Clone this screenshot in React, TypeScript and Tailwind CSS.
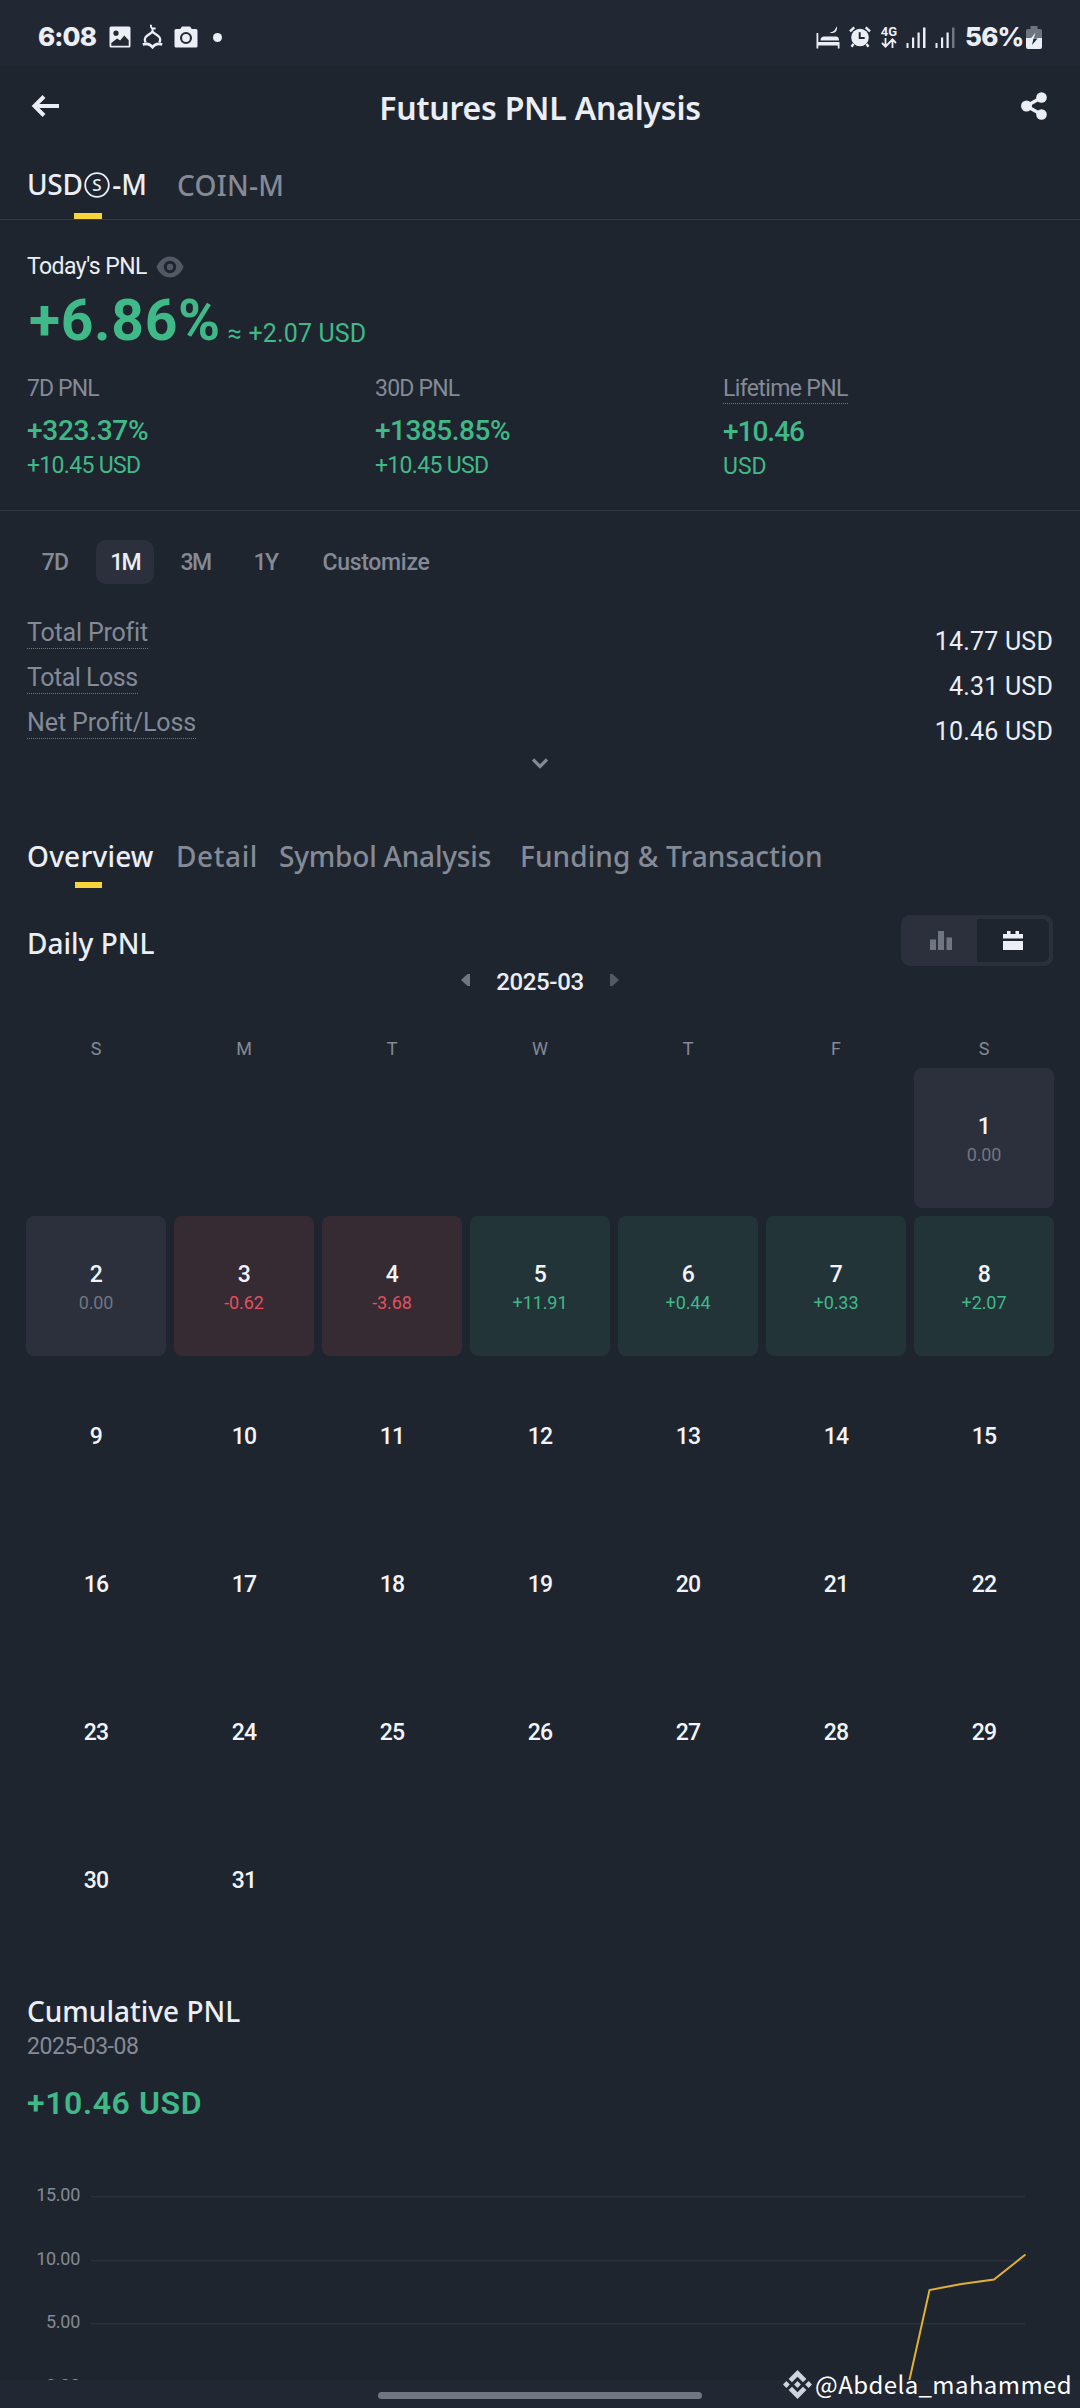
import React from 'react';

const WHITE = '#eceef5';

function StatusBar() {
  return (
    <header className="flex h-[66px] items-center justify-between bg-[#212733] pt-[8px] pr-[38px] pl-[38px] text-[#eceef5]">
      <div className="flex items-center">
        <span className="w-[59px] font-[Inter,sans-serif] text-[26px] leading-[26px] font-extrabold tracking-[-0.9px]">6:08</span>
        <svg className="ml-[12px] h-[22px] w-[22px]" viewBox="0 0 22 22">
          <path fillRule="evenodd" fill={WHITE} d="M2 0.5h18a1.5 1.5 0 0 1 1.5 1.5v18a1.5 1.5 0 0 1-1.5 1.5H2A1.5 1.5 0 0 1 .5 20V2A1.5 1.5 0 0 1 2 .5zM2.3 19.7h17.4v-5.4l-4.4-4.9-4.2 5.2-3-2.2-5.8 4.6zM7 4.6a2.6 2.6 0 1 0 0 5.2 2.6 2.6 0 0 0 0-5.2z" />
        </svg>
        <svg className="-mt-[2px] ml-[11px] h-[25px] w-[21px]" viewBox="0 0 21 25" fill="none" stroke={WHITE} strokeWidth="2">
          <path d="M9 .8c-.6 3 1 4.600 4.600 3.400" />
          <path d="M10.500 4v3.500" />
          <path d="M3.600 18.500c-2.500-5 1.500-7 4-8.500 1.600-1 2.900-2 2.900-3 0 1 1.300 2 2.900 3 2.500 1.500 6.500 3.500 4 8.500" strokeWidth="2.400" />
          <path d="M.8 20.600c4-1.400 7.300-.6 9.700 2.600 2.400-3.200 5.700-4 9.700-2.600" strokeWidth="2.600" />
        </svg>
        <svg className="ml-[11px] h-[22px] w-[24px]" viewBox="0 0 24 22">
          <path fillRule="evenodd" fill={WHITE} d="M8 .5h8l1.800 2.500H22a1.500 1.500 0 0 1 1.500 1.500V20a1.500 1.500 0 0 1-1.500 1.500H2A1.500 1.500 0 0 1 .5 20V4.500A1.500 1.500 0 0 1 2 3h4.200zM12 6a6 6 0 1 0 0 12 6 6 0 0 0 0-12z" />
          <circle cx="12" cy="12" r="3.900" fill={WHITE} />
        </svg>
        <span className="ml-[15px] h-[9px] w-[9px] rounded-full bg-[#eceef5]" />
      </div>
      <div className="flex items-center">
        <svg className="h-[23px] w-[24px]" viewBox="0 0 24 23" fill={WHITE}>
          <path d="M.5 7h1.800v9h21.200v6.500h-1.700v-3H2.300v3H.5z" />
          <path d="M4.500 14.500c0-3 1.500-4 3.500-4h12c2 0 3 1.500 3 4z" />
          <path d="M20.300.3c2.300 4-1.800 8.500-6.600 6.100 3 0 5.900-1.700 6.600-6.100z" />
        </svg>
        <svg className="ml-[9px] h-[22px] w-[22px]" viewBox="0 0 22 22">
          <circle cx="11" cy="11.500" r="8.800" fill={WHITE} />
          <path d="M4.500 18l-2 2.800M17.500 18l2 2.800M1 5.300l4.300-3.900M21 5.300l-4.300-3.900" stroke={WHITE} strokeWidth="2.400" />
          <path d="M10.700 6.300v5.700h5" fill="none" stroke="#212733" strokeWidth="2" />
        </svg>
        <span className="ml-[9px] flex h-[22px] w-[18px] flex-col items-center">
          <span className="text-[13px] leading-[11px] font-bold">4G</span>
          <svg className="mt-[1px] h-[10px] w-[16px]" viewBox="0 0 16 10" fill="none" stroke={WHITE} strokeWidth="1.800">
            <path d="M4.500 0v8.500M1 5l3.500 3.600L8 5M11.500 10V1.500M8 5l3.500-3.600L15 5" />
          </svg>
        </span>
        <svg className="ml-[8px] h-[21px] w-[20px]" viewBox="0 0 20 21" fill={WHITE}>
          <path d="M.5 16H2.500v5H.5zM6 10.500H8.200V21H6zM11.500 5.500h2.200V21h-2.200zM17 .5h2.500V21H17z" />
        </svg>
        <svg className="ml-[9px] h-[21px] w-[20px]" viewBox="0 0 20 21" fill={WHITE}>
          <path d="M.5 16H2.500v5H.5zM6 10.500H8.200V21H6zM11.500 5.500h2.200V21h-2.200z" />
          <path d="M17 .5h2.500V21H17z" opacity=".4" />
        </svg>
        <span className="ml-[10px] w-[61px] font-[Inter,sans-serif] text-[26px] leading-[26px] font-extrabold tracking-[-0.8px]">56%</span>
        <svg className="h-[23px] w-[16px]" viewBox="0 0 16 23">
          <path d="M4.500 0h7v3H14a2 2 0 0 1 2 2v7H0V5a2 2 0 0 1 2-2h2.500z" fill="#6f7580" />
          <path d="M0 12h16v9a2 2 0 0 1-2 2H2a2 2 0 0 1-2-2z" fill={WHITE} />
          <path d="M9.500 6.500L4.500 13h3z" fill={WHITE} />
          <path d="M6 19l1.500-6.500h4z" fill="#212733" />
        </svg>
      </div>
    </header>
  );
}

function TitleBar() {
  return (
    <div className="flex h-[85px] items-center justify-between pr-[33px] pl-[31px]">
      <svg className="-mt-[5px] h-[22px] w-[28px]" viewBox="0 0 28 22" fill="none" stroke={WHITE} strokeWidth="4">
        <path d="M3.500 11H28" />
        <path d="M13 1.500L3.500 11l9.500 9.500" />
      </svg>
      <h1 className="-mt-[1px] font-['Noto_Sans',sans-serif] text-[32px] font-semibold tracking-[-0.21px] text-[#eceef5]">Futures PNL Analysis</h1>
      <svg className="-mt-[5px] h-[28px] w-[26px]" viewBox="0 0 26 28" fill={WHITE}>
        <circle cx="5.500" cy="14" r="5.500" />
        <circle cx="20.500" cy="5.500" r="5.300" />
        <circle cx="20.500" cy="22.500" r="5.300" />
        <path d="M5.500 14l15-8.500M5.500 14l15 8.500" stroke={WHITE} strokeWidth="3.400" />
      </svg>
    </div>
  );
}

function MarginTabs() {
  return (
    <nav className="flex h-[69px] border-b border-[#333b47] pl-[27px] font-['Noto_Sans',sans-serif] text-[28px] font-medium">
      <div className="relative flex w-[120px] items-center justify-between text-[#eceef5]">
        <span className="-mt-[2px] tracking-[-0.3px]">USD</span>
        <svg className="h-[26px] w-[26px]" viewBox="0 0 26 26">
          <circle cx="13" cy="13" r="11.800" fill="none" stroke={WHITE} strokeWidth="1.800" />
          <text x="13" y="19.300" textAnchor="middle" fontSize="17" fontWeight="500" fill={WHITE}>S</text>
        </svg>
        <span className="-mt-[2px]">-M</span>
        <span className="absolute bottom-0 left-[47px] h-[6px] w-[28px] bg-[#f8d33a]" />
      </div>
      <div className="ml-[30px] flex items-center tracking-[0.3px] text-[#848a96]">COIN-M</div>
    </nav>
  );
}

function PnlSummary() {
  return (
    <section className="h-[291px] border-b border-[#2e3540] pt-[32px] pl-[27px] text-[#3fb987]">
      <div className="flex h-[30px] items-center">
        <span className="text-[23px] tracking-[-0.57px] text-[#eceef5]">Today's PNL</span>
        <svg className="-mt-[1px] ml-[9px] h-[22px] w-[28px]" viewBox="0 0 28 22">
          <path fillRule="evenodd" fill="#525964" d="M14 .5C8 .5 3 5 .5 11 3 17 8 21.500 14 21.500S25 17 27.500 11C25 5 20 .5 14 .5zM14 4.800a6.200 6.200 0 1 1 0 12.400 6.200 6.200 0 0 1 0-12.400z" />
          <circle cx="14" cy="11" r="3.200" fill="#525964" />
        </svg>
      </div>
      <div className="flex h-[77px] items-center">
        <span className="ml-[2px] text-[57px] font-bold tracking-[0.66px]">+6.86%</span>
        <span className="mt-[27px] ml-[7px] text-[25px] tracking-[0.15px]">≈ +2.07 USD</span>
      </div>
      <div className="grid grid-cols-3 pr-[9px]">
        <div>
          <div className="flex h-[60px] items-center text-[23px] tracking-[-0.9px] text-[#848a96]">7D PNL</div>
          <div className="flex h-[24px] items-center text-[28px] font-medium tracking-[-0.27px]">+323.37%</div>
          <div className="flex h-[46px] items-center text-[23px] tracking-[-0.68px]">+10.45 USD</div>
        </div>
        <div>
          <div className="flex h-[60px] items-center text-[23px] tracking-[-0.8px] text-[#848a96]">30D PNL</div>
          <div className="flex h-[24px] items-center text-[28px] font-medium tracking-[-0.48px]">+1385.85%</div>
          <div className="flex h-[46px] items-center text-[23px] tracking-[-0.68px]">+10.45 USD</div>
        </div>
        <div>
          <div className="flex h-[61px] items-start">
            <span className="mt-[13px] h-[32px] border-b border-dotted border-[#6f7682] text-[23px] leading-[34px] tracking-[-0.64px] text-[#848a96]">
              Lifetime PNL
            </span>
          </div>
          <div className="flex h-[24px] items-center text-[28px] font-medium tracking-[-1px]">+10.46</div>
          <div className="flex h-[46px] items-center text-[23px]">USD</div>
        </div>
      </div>
    </section>
  );
}

function RangeFilter() {
  return (
    <div className="flex h-[73px] pt-[29px] pl-[26px] text-[23px] font-medium text-[#848a96]">
      <div className="flex w-[58px] items-center justify-center pt-[2px] tracking-[-0.8px]">7D</div>
      <div className="ml-[12px] flex w-[58px] items-center justify-center rounded-[10px] bg-[#2b303c] pt-[2px] tracking-[-1.800px] text-[#eceef5]">1M</div>
      <div className="ml-[11px] flex w-[61px] items-center justify-center pt-[2px] tracking-[-1.500px]">3M</div>
      <div className="ml-[12px] flex w-[55px] items-center justify-center pt-[2px] tracking-[-1.500px]">1Y</div>
      <div className="ml-[15px] flex w-[136px] items-center justify-center pt-[2px] tracking-[-0.3px]">Customize</div>
    </div>
  );
}

function TotalRow({ label, value, fit }: { label: string; value: string; fit: string }) {
  return (
    <div className="flex h-[45px] items-start justify-between pr-[27px] pl-[27px] text-[25px]">
      <span className={`h-[33px] border-b border-dotted border-[#6f7682] leading-[34px] text-[#848a96] ${fit}`}>{label}</span>
      <span className="mt-[10px] leading-[32px] tracking-[0.2px] text-[#eceef5]">{value}</span>
    </div>
  );
}

function Totals() {
  return (
    <section className="mt-[32px]">
      <TotalRow label="Total Profit" value="14.77 USD" fit="tracking-[-0.19px]" />
      <TotalRow label="Total Loss" value="4.31 USD" fit="tracking-[-0.5px]" />
      <TotalRow label="Net Profit/Loss" value="10.46 USD" fit="tracking-[-0.1px]" />
      <div className="flex h-[26px] items-center justify-center pb-[2px]">
        <svg className="h-[11px] w-[16px]" viewBox="0 0 16 11" fill="none" stroke="#848a96" strokeWidth="3.200">
          <path d="M1 1.500l7 7 7-7" />
        </svg>
      </div>
    </section>
  );
}

function SectionTabs() {
  return (
    <nav className="mt-[53px] flex h-[58px] pl-[27px] font-['Noto_Sans',sans-serif] text-[28px] font-medium text-[#848a96]">
      <div className="relative flex h-[52px] w-[149px] items-center tracking-[0.2px] text-[#eceef5]">
        Overview
        <span className="absolute -bottom-[6px] left-[48px] h-[6px] w-[27px] bg-[#f8d33a]" />
      </div>
      <div className="flex h-[52px] w-[103px] items-center tracking-[0.6px]">Detail</div>
      <div className="flex h-[52px] w-[241px] items-center tracking-[-0.2px]">Symbol Analysis</div>
      <div className="flex h-[52px] items-center tracking-[0.1px]">Funding &amp; Transaction</div>
    </nav>
  );
}

type Day = { day: number; value?: string };

const values: Record<number, string> = {
  1: '0.00',
  2: '0.00',
  3: '-0.62',
  4: '-3.68',
  5: '+11.91',
  6: '+0.44',
  7: '+0.33',
  8: '+2.07',
};

const days: Day[] = Array.from({ length: 31 }, (_, i) => ({ day: i + 1, value: values[i + 1] }));

function tone(value?: string) {
  if (!value) return { cell: '', text: '' };
  if (value.startsWith('+')) return { cell: 'bg-[#233439]', text: 'text-[#3fb987]' };
  if (value.startsWith('-')) return { cell: 'bg-[#362a33]', text: 'text-[#e2505f]' };
  return { cell: 'bg-[#2b303c]', text: 'text-[#6f7682]' };
}

function DayCell({ day, value }: Day) {
  const t = tone(value);
  return (
    <div className={`flex h-[140px] flex-col items-center justify-center rounded-[8px] pt-[5px] ${t.cell} ${day === 1 ? 'col-start-7' : ''}`}>
      <span className="text-[23px] leading-[28px] font-medium tracking-[-0.8px] text-[#f2f4fa]">{day}</span>
      {value && <span className={`text-[18px] leading-[28px] tracking-[-0.1px] ${t.text}`}>{value}</span>}
    </div>
  );
}

function DailyPnl() {
  return (
    <section className="mt-[27px]">
      <div className="flex h-[51px] items-center justify-between pr-[27px] pl-[27px]">
        <h2 className="pt-[4px] font-['Noto_Sans',sans-serif] text-[28px] font-medium text-[#eceef5]">Daily PNL</h2>
        <div className="flex h-[51px] w-[152px] items-center rounded-[9px] bg-[#2b303c] p-[4px]">
          <div className="flex h-full w-[72px] items-center justify-center">
            <svg className="h-[19px] w-[22px]" viewBox="0 0 22 19" fill="#6f7682">
              <path d="M0 8.500h6V19H0zM8 0h6v19H8zM16.500 6.500h5.500V19h-5.500z" />
            </svg>
          </div>
          <div className="flex h-full w-[72px] items-center justify-center rounded-r-[7px] bg-[#1f252f]">
            <svg className="h-[19px] w-[20px]" viewBox="0 0 20 19" fill={WHITE}>
              <path d="M0 3h4V0h3.500v3h5V0H16v3h4v4.500H0zM0 10h20v9H0z" />
            </svg>
          </div>
        </div>
      </div>
      <div className="flex h-[31px] items-center justify-center">
        <svg className="-mt-[4px] h-[12px] w-[9px]" viewBox="0 0 9 12" fill="#6f7682">
          <path d="M9 0v12H6.500L0 6l6.500-6z" />
        </svg>
        <span className="mx-[26px] text-[24px] font-medium tracking-[-0.39px] text-[#eceef5]">2025-03</span>
        <svg className="-mt-[4px] h-[12px] w-[9px]" viewBox="0 0 9 12" fill="#525964">
          <path d="M0 0v12h2.500L9 6 2.500 0z" />
        </svg>
      </div>
      <div className="mt-[43px] grid grid-cols-7 gap-x-[8px] px-[26px] text-center text-[18px] leading-[17px] text-[#848a96]">
        {['S', 'M', 'T', 'W', 'T', 'F', 'S'].map((d, i) => (
          <span key={i}>{d}</span>
        ))}
      </div>
      <div className="mt-[11px] grid grid-cols-7 gap-[8px] px-[26px]">
        {days.map((d) => (
          <DayCell key={d.day} day={d.day} value={d.value} />
        ))}
      </div>
    </section>
  );
}

function CumulativePnl() {
  const lines = [
    { label: '15.00', y: 54 },
    { label: '10.00', y: 118 },
    { label: '5.00', y: 181 },
    { label: '0.00', y: 245 },
  ];
  return (
    <section className="mt-[45px]">
      <div className="pl-[27px]">
        <h2 className="flex h-[36px] items-center font-['Noto_Sans',sans-serif] text-[28px] font-medium text-[#eceef5]">Cumulative PNL</h2>
        <div className="flex h-[34px] items-center pt-[2px] text-[23px] tracking-[-0.47px] text-[#848a96]">2025-03-08</div>
        <div className="flex h-[79px] items-center text-[32px] font-semibold tracking-[0.6px] text-[#3fb987]">+10.46 USD</div>
      </div>
      <svg className="block h-[238px] w-[1080px] overflow-hidden" viewBox="0 0 1080 238">
        {lines.map((l) => (
          <g key={l.label}>
            <text x="80" y={l.y + 5} textAnchor="end" fontSize="18" letterSpacing="-0.27" fill="#848a96">
              {l.label}
            </text>
            <rect x="91" y={l.y} width="934" height="1.500" fill="#2b313c" />
          </g>
        ))}
        <path d="M909 240L929.500 148l32-6 32.500-4.500 31.500-25" fill="none" stroke="#e0b135" strokeWidth="2" />
      </svg>
    </section>
  );
}

function Watermark() {
  return (
    <div className="absolute right-[8px] bottom-[6px] flex h-[36px] items-center">
      <svg className="h-[29px] w-[29px]" viewBox="0 0 28 28" fill="#cfd3dc">
        <path d="M14 0l8.600 8.600-3.300 3.300L14 6.600l-5.300 5.300-3.300-3.300zM14 28l-8.600-8.600 3.300-3.300 5.300 5.300 5.300-5.300 3.300 3.300zM14 10.700l3.300 3.300-3.300 3.300-3.300-3.300zM3.300 10.700L6.600 14l-3.300 3.300L0 14zM24.700 10.700L28 14l-3.300 3.300-3.300-3.300z" />
      </svg>
      <span className="ml-[3px] font-['Noto_Sans_CJK_SC',sans-serif] text-[24px] leading-[34px] tracking-[0.4px] text-white">
        @Abdela_mahammed
      </span>
    </div>
  );
}

export default function App() {
  return (
    <div className="relative h-[2408px] w-[1080px] overflow-hidden bg-[#1f252f] font-[Roboto,sans-serif]">
      <StatusBar />
      <TitleBar />
      <MarginTabs />
      <PnlSummary />
      <RangeFilter />
      <Totals />
      <SectionTabs />
      <DailyPnl />
      <CumulativePnl />
      <footer className="flex h-[28px] justify-center bg-[#212733] pt-[12px]">
        <span className="h-[7px] w-[324px] rounded-full bg-[#717782]" />
      </footer>
      <Watermark />
    </div>
  );
}
